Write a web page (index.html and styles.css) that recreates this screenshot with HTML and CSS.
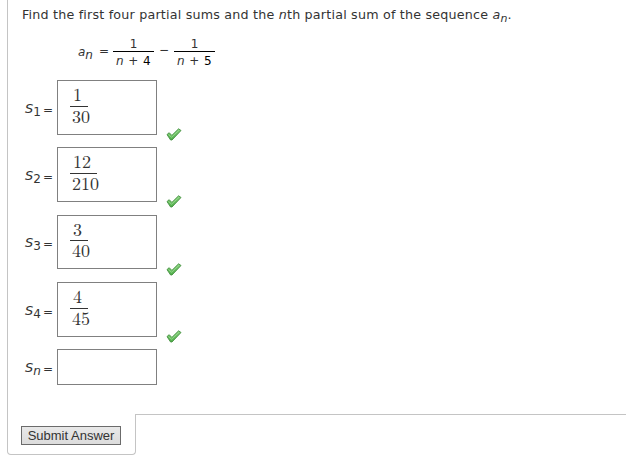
FILE: index.html
```html
<!DOCTYPE html>
<html lang="en">
<head>
<meta charset="utf-8">
<title>Partial sums</title>
<link rel="stylesheet" href="styles.css">
</head>
<body>
<svg class="defs" width="0" height="0" aria-hidden="true">
  <defs>
    <linearGradient id="green" x1="0" y1="0" x2="0" y2="1"><stop offset="0" stop-color="#86cf7c"/><stop offset="1" stop-color="#4fae49"/></linearGradient>
    <symbol id="check" viewBox="0 0 16 13">
      <path d="M1 6.6 3.2 4.7 5.9 7.4 12.6.8 15 2.5 6 12 4.6 12Z" fill="url(#green)" stroke="#438f3e" stroke-width=".9" stroke-linejoin="round"/>
      <path d="M2.5 6.5 5.5 9.2 13 2.2" fill="none" stroke="#93d889" stroke-width="1"/>
    </symbol>
  </defs>
</svg>
<main class="question">
  <section class="content">
    <p class="prompt">Find the first four partial sums and the <i>n</i>th partial sum of the sequence <i>a</i><sub><i>n</i></sub>.</p>
    <div class="equation">
      <span class="term"><i>a</i><sub><i>n</i></sub></span><span class="equals">=</span>
      <span class="ratio"><span class="top">1</span><span class="bottom"><i>n</i> + <b>4</b></span></span>
      <span class="minus">−</span>
      <span class="ratio"><span class="top">1</span><span class="bottom"><i>n</i> + <b>5</b></span></span>
    </div>
    <div class="answers">
      <div class="row"><span class="label"><i>S</i><sub>1</sub></span><span class="eq">=</span><div class="field"><span class="frac"><span class="num">1</span><span class="den">30</span></span></div><svg class="check"><use href="#check"/></svg></div>
      <div class="row"><span class="label"><i>S</i><sub>2</sub></span><span class="eq">=</span><div class="field"><span class="frac"><span class="num">12</span><span class="den">210</span></span></div><svg class="check"><use href="#check"/></svg></div>
      <div class="row short"><span class="label"><i>S</i><sub>3</sub></span><span class="eq">=</span><div class="field"><span class="frac"><span class="num">3</span><span class="den">40</span></span></div><svg class="check"><use href="#check"/></svg></div>
      <div class="row"><span class="label"><i>S</i><sub>4</sub></span><span class="eq">=</span><div class="field"><span class="frac"><span class="num">4</span><span class="den">45</span></span></div><svg class="check"><use href="#check"/></svg></div>
      <div class="row blank"><span class="label"><i>S</i><sub><i>n</i></sub></span><span class="eq">=</span><div class="field"></div></div>
    </div>
  </section>
  <footer class="footer">
    <div class="tab"><button class="submit">Submit Answer</button></div>
    <div class="edge"></div>
  </footer>
</main>
</body>
</html>
```
FILE: styles.css
```css
* { box-sizing: border-box; }
body { margin: 0; background: #fff; color: #333; font: 12px/16px Verdana, "DejaVu Sans", sans-serif; overflow: hidden; }
.defs { display: block; }
.question { height: 455px; margin-left: 7px; }
.content { height: 414px; border-left: 1px solid #c4c4c4; padding: 7px 0 0 14px; }
sub { font-size: 12px; line-height: 0; vertical-align: baseline; position: relative; top: 3px; }
.prompt { margin: 0; height: 16px; white-space: nowrap; font-size: 12.7px; letter-spacing: 0.2px; }
.prompt sub { font-size: 11px; }
.equation { display: flex; height: 32px; margin: 14px 0 0 56px; }
.term { width: 21px; padding-top: 7px; white-space: nowrap; }
.equals { width: 14px; padding-top: 6px; }
.ratio { width: 41px; text-align: center; }
.top { display: block; height: 15px; line-height: 15px; border-bottom: 1px solid #000; }
.bottom { display: block; line-height: 18px; letter-spacing: 0.4px; white-space: nowrap; }
.bottom b { color: #000; font-weight: normal; }
.minus { width: 20px; text-align: center; padding-top: 5px; }
.answers { display: flex; flex-direction: column; gap: 12px; margin-top: 11px; padding-left: 2px; }
.row { display: flex; height: 55px; }
.row:nth-child(3) { margin-top: 1px; }
.row:nth-child(4) { margin-top: 1px; }
.short { height: 54px; }
.label { width: 19px; padding: 21px 0 0 1px; font-size: 13px; white-space: nowrap; }
.eq { width: 14px; padding-top: 22px; }
.short .label { padding-top: 20px; }
.short .eq { padding-top: 21px; }
.blank { height: 36px; }
.blank .label { padding-top: 11px; }
.blank .eq { padding-top: 12px; }
.field { width: 100px; border: 1px solid #808080; padding: 5px 0 0 12px; }
.frac { display: inline-block; font: 18px/18px "Latin Modern Math", "Liberation Serif", serif; }
.num { display: block; height: 20px; padding: 0 1px 0 3px; line-height: 18px; }
.den { display: block; height: 23px; padding: 1px 0 0 2px; background: linear-gradient(#333, #333) 0 0 / calc(100% - 2px) 1px no-repeat; line-height: 20px; white-space: nowrap; }
.short .num { height: 19px; }
.check { width: 16px; height: 13px; margin: auto 0 -6px 9px; }
.short .check { margin-bottom: -7px; }
.footer { display: flex; height: 41px; }
.tab { width: 129px; height: 41px; padding: 12px 0 0 13px; border: 1px solid #c4c4c4; border-top: 0; border-radius: 0 0 4px 4px; }
.edge { flex: 1; height: 1px; background: #c4c4c4; }
.submit { display: block; width: 100px; height: 19px; padding: 0; border: 1px solid #6b6b6b; border-radius: 0; background: linear-gradient(#e8e8e8, #dcdcdc); color: #333; font: 13px/17px Arial, "Liberation Sans", sans-serif; white-space: nowrap; }
```
